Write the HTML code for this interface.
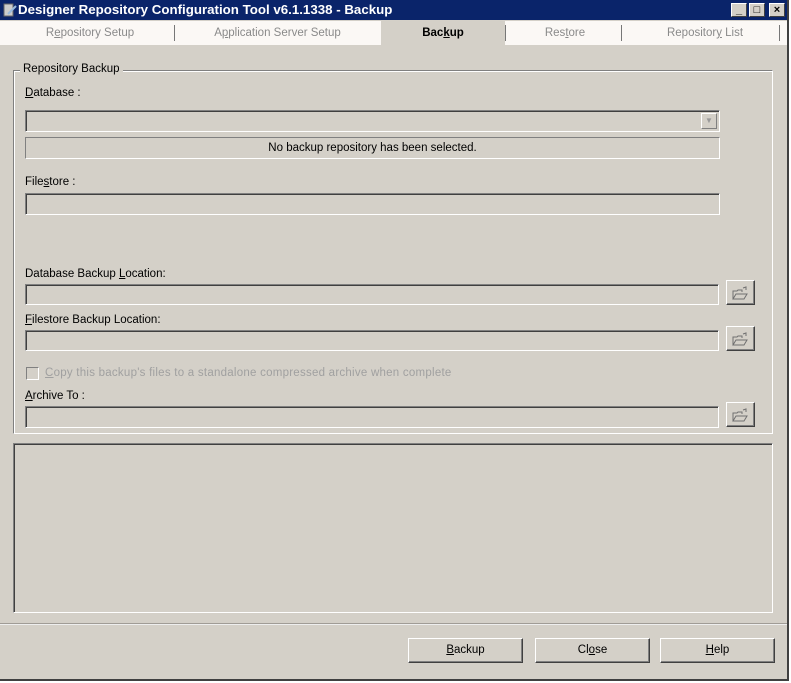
<!DOCTYPE html>
<html><head><style>
*{box-sizing:border-box;margin:0;padding:0}
body{width:791px;height:683px;background:#fff;font-family:"Liberation Sans",sans-serif;font-size:11px;color:#000;position:relative;overflow:hidden}
.a{position:absolute}
.win{left:0;top:0;width:789px;height:681px;background:#d4d0c8;border-right:2px solid #404040;border-bottom:2px solid #404040}
.title{left:0;top:0;width:787px;height:20px;background:#0a246a;color:#fff;font-weight:bold;font-size:13.3px;line-height:20px;padding-left:18px}
.tb{top:3px;width:16px;height:14px;background:#d4d0c8;border:1px solid;border-color:#fff #404040 #404040 #fff;font-size:11px;line-height:12px;text-align:center;color:#000;font-weight:bold}
.tabs{left:0;top:21px;width:787px;height:24px;background:#fbf8f5}
.tab{top:21px;height:24px;line-height:24px;text-align:center;color:#8a8a8a;font-size:11.5px}
.sep{top:25px;width:1px;height:16px;background:#777}
.sunk{border:1px solid;border-color:#808080 #fff #fff #808080;box-shadow:inset 1px 1px 0 #404040}
.lbl{font-size:11.5px}
.btn{width:29px;height:25px;background:#d4d0c8;border:1px solid;border-color:#fff #404040 #404040 #fff;box-shadow:inset -1px -1px 0 #808080}
.pb{top:638px;width:115px;height:25px;border:1px solid;border-color:#fff #404040 #404040 #fff;box-shadow:inset -1px -1px 0 #808080;text-align:center;line-height:22px;font-size:11.5px}
</style></head><body>
<div class="a win"></div>
<div class="a title">Designer Repository Configuration Tool v6.1.1338 - Backup</div>
<svg class="a" style="left:2px;top:2px" width="16" height="16"><rect x="2" y="2" width="9" height="12" fill="#ccc" stroke="#666"/><path d="M6 12 L14 4" stroke="#9bd" stroke-width="2"/></svg>
<div class="a tb" style="left:731px">_</div>
<div class="a tb" style="left:749px">□</div>
<div class="a tb" style="left:769px">×</div>
<div class="a tabs"></div>
<div class="a" style="left:381px;top:21px;width:124px;height:24px;background:#d4d0c8"></div>
<div class="a tab" style="left:20px;width:140px">R<u>e</u>pository Setup</div>
<div class="a sep" style="left:174px"></div>
<div class="a tab" style="left:190px;width:175px">A<u>p</u>plication Server Setup</div>
<div class="a tab" style="left:381px;width:124px;color:#000;font-weight:bold">Bac<u>k</u>up</div>
<div class="a sep" style="left:505px"></div>
<div class="a tab" style="left:510px;width:110px">Res<u>t</u>ore</div>
<div class="a sep" style="left:621px"></div>
<div class="a tab" style="left:630px;width:150px">Repositor<u>y</u> List</div>
<div class="a sep" style="left:779px"></div>

<div class="a" style="left:13px;top:70px;width:760px;height:364px;border:1px solid;border-color:#808080 #fff #fff #808080;box-shadow:inset 1px 1px 0 #fff,1px 1px 0 #808080 inset"></div>
<div class="a lbl" style="left:20px;top:63px;background:#d4d0c8;padding:0 3px">Repository Backup</div>
<div class="a lbl" style="left:25px;top:87px"><u>D</u>atabase :</div>
<div class="a sunk" style="left:25px;top:110px;width:695px;height:22px"></div>
<div class="a" style="left:701px;top:113px;width:16px;height:16px;border:1px solid;border-color:#fff #808080 #808080 #fff;color:#999;font-size:8px;text-align:center;line-height:14px">▼</div>
<div class="a" style="left:25px;top:137px;width:695px;height:22px;border:1px solid;border-color:#808080 #fff #fff #808080;text-align:center;line-height:20px;font-size:11.5px">No backup repository has been selected.</div>
<div class="a lbl" style="left:25px;top:176px">File<u>s</u>tore :</div>
<div class="a sunk" style="left:25px;top:193px;width:695px;height:22px"></div>
<div class="a lbl" style="left:25px;top:268px">Database Backup <u>L</u>ocation:</div>
<div class="a sunk" style="left:25px;top:284px;width:694px;height:21px"></div>
<div class="a btn" style="left:726px;top:280px"></div>
<div class="a lbl" style="left:25px;top:314px"><u>F</u>ilestore Backup Location:</div>
<div class="a sunk" style="left:25px;top:330px;width:694px;height:21px"></div>
<div class="a btn" style="left:726px;top:326px"></div>
<div class="a" style="left:26px;top:367px;width:13px;height:13px;border:1px solid;border-color:#808080 #fff #fff #808080"></div>
<div class="a lbl" style="left:45px;top:367px;color:#a0a0a0;letter-spacing:0.25px"><u>C</u>opy this backup's files to a standalone compressed archive when complete</div>
<div class="a lbl" style="left:25px;top:390px"><u>A</u>rchive To :</div>
<div class="a sunk" style="left:25px;top:406px;width:694px;height:22px"></div>
<div class="a btn" style="left:726px;top:402px"></div>
<svg class="a" style="left:731px;top:285px" width="20" height="160">
<g id="f" fill="none" stroke="#707070"><path d="M2 14 V6 H6 L7 5 H11 V7 M2 14 L5 9 H16 L13 14 Z"/><path d="M12 3 L15 2 L15 5" /></g>
<use href="#f" y="46"/><use href="#f" y="122"/></svg>

<div class="a" style="left:13px;top:443px;width:760px;height:170px;border:1px solid;border-color:#808080 #fff #fff #808080;box-shadow:inset 1px 1px 0 #404040"></div>
<div class="a" style="left:0;top:623px;width:787px;height:1px;background:#a09c96"></div>
<div class="a" style="left:0;top:624px;width:787px;height:1px;background:#eee"></div>
<div class="a pb" style="left:408px"><u>B</u>ackup</div>
<div class="a pb" style="left:535px">Cl<u>o</u>se</div>
<div class="a pb" style="left:660px"><u>H</u>elp</div>
</body></html>
